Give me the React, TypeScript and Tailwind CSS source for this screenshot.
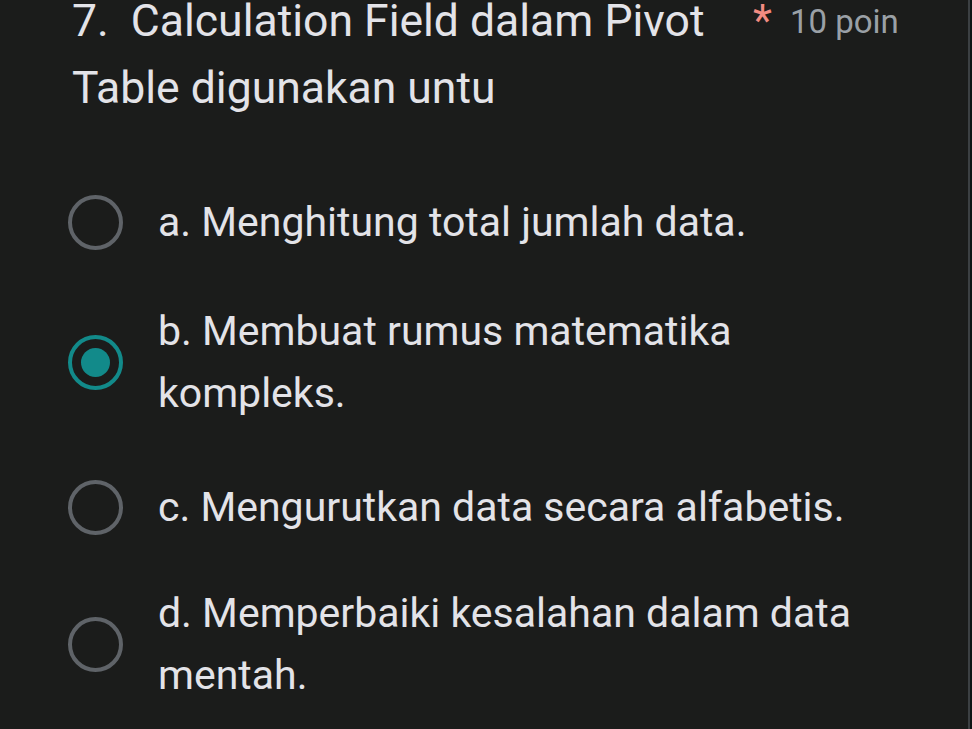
import React from "react";

type Option = { label: string; selected?: boolean; gap: string };

const options: Option[] = [
  { label: "a. Menghitung total jumlah data.", gap: "mt-0" },
  { label: "b. Membuat rumus matematika kompleks.", selected: true, gap: "mt-[47px]" },
  { label: "c. Mengurutkan data secara alfabetis.", gap: "mt-[52px]" },
  { label: "d. Memperbaiki kesalahan dalam data mentah.", gap: "mt-[44px]" },
];

function Radio({ selected }: { selected?: boolean }) {
  if (selected) {
    return (
      <div className="flex h-[55px] w-[55px] shrink-0 items-center justify-center rounded-full border-[4px] border-[#128a8a]">
        <div className="h-[29px] w-[29px] rounded-full bg-[#128a8a]" />
      </div>
    );
  }
  return <div className="h-[55px] w-[55px] shrink-0 rounded-full border-[4px] border-[#5f6368]" />;
}

export default function App() {
  return (
    <div className="flex h-[729px] w-[972px] overflow-hidden bg-[#1b1c1b] font-['Roboto',sans-serif]">
      <div className="flex-1 pl-[72px]">
        {/* Question title */}
        <div className="-mt-[12px] flex items-start">
          <div className="w-[665px] text-[44.5px] leading-[67px] text-[#e3e3e8]">
            7.&nbsp; Calculation Field dalam Pivot Table digunakan untu
          </div>
          <span className="ml-[16px] text-[44px] leading-[67px] text-[#f28b82]">*</span>
          <span className="ml-[18px] text-[33px] leading-[67px] text-[#9aa0a6]">10 poin</span>
        </div>

        {/* Options */}
        <div className="mt-[69px] flex flex-col">
          {options.map((o) => (
            <div key={o.label} className={`-ml-[4px] flex items-center gap-[35px] ${o.gap}`}>
              <Radio selected={o.selected} />
              <div className="w-[715px] text-[41px] leading-[62px] text-[#e3e3e8]">{o.label}</div>
            </div>
          ))}
        </div>
      </div>
      <div className="w-[2px] bg-[#3c4043]" />
      <div className="w-[2px] bg-[#0e1515]" />
    </div>
  );
}
